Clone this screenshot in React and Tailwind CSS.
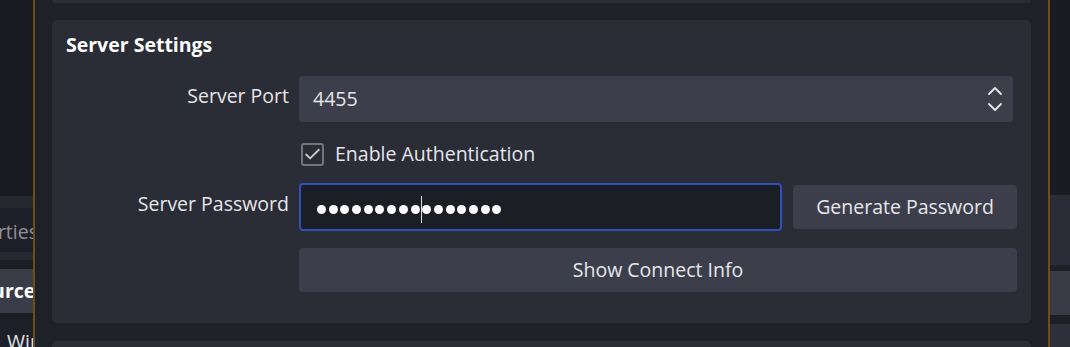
import { Check, ChevronUp, ChevronDown } from "lucide-react";

export default function App() {
  const dots = Array.from({ length: 16 });

  return (
    <div className="flex h-[347px] w-[1070px] overflow-hidden bg-[#1a1b23] font-['Open_Sans',sans-serif] text-[19.5px] text-[#e6e6ea]">
      {/* main window peeking out on the left */}
      <div className="flex w-[33px] shrink-0 flex-col">
        <div className="h-[196px] bg-[#1a1b23]" />
        <div className="h-[12px] bg-[#262832]" />
        <div className="flex h-[44px] items-center justify-end overflow-hidden bg-[#1e2029] text-[#8e909a]">
          <span className="whitespace-nowrap pt-[4px] -mr-[5px]">Properties</span>
        </div>
        <div className="h-[8px] bg-[#262832]" />
        <div className="h-[9px] bg-[#1c1d25]" />
        <div className="flex h-[44px] items-center justify-end overflow-hidden bg-[#3a3c47] font-bold text-white">
          <span className="whitespace-nowrap -mr-[12px]">Sources</span>
        </div>
        <div className="h-[6px] bg-[#1c1d25]" />
        <div className="flex-1 overflow-hidden bg-[#1e2029] pl-[7px] pt-[8px] text-[#e0e0e4]">
          <span className="whitespace-nowrap">Window Capture</span>
        </div>
      </div>

      <div className="w-[2px] shrink-0 bg-[#6b4d22]" />

      {/* dialog */}
      <div className="flex w-[1013px] shrink-0 flex-col bg-[#1f2129] px-[17px]">
        <div className="h-[3px] rounded-b-[4px] bg-[#2a2c36]" />

        <div className="mt-[17px] h-[303px] rounded-[5px] bg-[#2a2c36] px-[14px] pt-[13px]">
          <div className="font-bold leading-[24px] text-white">Server Settings</div>

          {/* port */}
          <div className="mt-[19px] flex gap-[10px]">
            <div className="w-[223px] pt-[8px] text-right leading-[24px]">Server Port</div>
            <div className="mr-[4px] flex h-[46px] flex-1 items-center justify-between rounded-[4px] bg-[#3c3f4b] pl-[14px] pr-[6px]">
              <span className="leading-[24px]">4455</span>
              <div className="flex flex-col items-center text-[#e6e6ea]">
                <ChevronUp size={24} strokeWidth={1.8} className="-mb-[4px]" />
                <ChevronDown size={24} strokeWidth={1.8} className="-mt-[4px]" />
              </div>
            </div>
          </div>

          {/* auth checkbox */}
          <div className="mt-[20px] flex gap-[10px]">
            <div className="w-[223px]" />
            <div className="flex items-center gap-[11px] pl-[2px]">
              <div className="flex h-[23px] w-[23px] items-center justify-center rounded-[3px] border-2 border-[#72747e] text-[#c9cad0]">
                <Check size={19} strokeWidth={2.3} />
              </div>
              <span className="leading-[24px]">Enable Authentication</span>
            </div>
          </div>

          {/* password */}
          <div className="mt-[17px] flex gap-[10px]">
            <div className="w-[223px] pt-[9px] text-right leading-[24px]">Server Password</div>
            <div className="flex h-[48px] w-[483px] items-center rounded-[4px] border-2 border-[#2f51b5] bg-[#1c1e26] pl-[16px] pt-[4px]">
              {dots.map((_, i) => (
                <span key={i} className="flex items-center">
                  <span className="mr-[2.7px] h-[9px] w-[9px] rounded-full bg-white" />
                  {i === 8 && <span className="-ml-[1px] h-[27px] w-px bg-[#e0e0e0]" />}
                </span>
              ))}
            </div>
            <button className="ml-[1px] mt-[2px] h-[44px] flex-1 rounded-[4px] bg-[#3c3f4b] leading-[24px] text-[#e6e6ea]">
              Generate Password
            </button>
          </div>

          {/* connect info */}
          <div className="mt-[17px] flex gap-[10px]">
            <div className="w-[223px]" />
            <button className="h-[44px] flex-1 rounded-[4px] bg-[#3c3f4b] leading-[24px] text-[#e6e6ea]">
              Show Connect Info
            </button>
          </div>
        </div>

        <div className="mt-[18px] flex-1 rounded-t-[5px] bg-[#2a2c36]" />
      </div>

      <div className="w-[2px] shrink-0 bg-[#6b4d22]" />

      {/* main window on the right */}
      <div className="flex w-[20px] shrink-0 flex-col">
        <div className="h-[195px] bg-[#1a1b23]" />
        <div className="h-[70px] bg-[#2a2c37]" />
        <div className="h-[6px] bg-[#1e2028]" />
        <div className="h-[44px] bg-[#393b47]" />
        <div className="h-[9px] bg-[#1e2028]" />
        <div className="flex-1 bg-[#2d2f3a]" />
      </div>
    </div>
  );
}
